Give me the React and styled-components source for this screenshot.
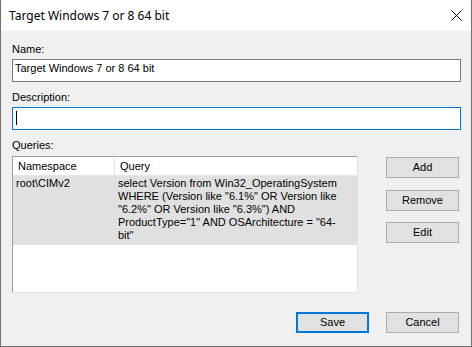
import styled, { createGlobalStyle } from "styled-components";

const GlobalStyle = createGlobalStyle`
    body {
        margin: 0;
        background: #ffffff;
        font-family: "Liberation Sans", Arial, sans-serif;
    }
`;

export default function App(){
    return(
        <>
        <GlobalStyle/>
        <WINDOW>
            <TITLEBAR>
                <TITLE>Target Windows 7 or 8 64 bit</TITLE>
                <svg width="11" height="11" viewBox="0 0 11 11">
                    <path d="M0.5 0.5 L10.5 10.5 M10.5 0.5 L0.5 10.5" stroke="#000000" strokeWidth="1" fill="none"/>
                </svg>
            </TITLEBAR>
            <BODY>
                <LABEL top={12}>Name:</LABEL>
                <FIELD>Target Windows 7 or 8 64 bit</FIELD>
                <LABEL top={9}>Description:</LABEL>
                <FIELD focused><CARET/></FIELD>
                <LABEL top={9}>Queries:</LABEL>
                <MAIN>
                    <LIST>
                        <HEADER>
                            <HEADCELL divider>Namespace</HEADCELL>
                            <HEADCELL>Query</HEADCELL>
                        </HEADER>
                        <ROW>
                            <CELL>root\CIMv2</CELL>
                            <CELL>
                                select Version from Win32_OperatingSystem<br/>
                                WHERE (Version like "6.1%" OR Version like<br/>
                                "6.2%" OR Version like "6.3%") AND<br/>
                                ProductType="1" AND OSArchitecture = "64-<br/>
                                bit"
                            </CELL>
                        </ROW>
                    </LIST>
                    <SIDE>
                        <BUTTON top={1}>Add</BUTTON>
                        <BUTTON top={12}>Remove</BUTTON>
                        <BUTTON top={11}>Edit</BUTTON>
                    </SIDE>
                </MAIN>
                <FOOTER>
                    <BUTTON primary>Save</BUTTON>
                    <BUTTON>Cancel</BUTTON>
                </FOOTER>
            </BODY>
        </WINDOW>
        </>
    );
}

const WINDOW = styled.div`
    width: 472px;
    height: 347px;
    box-sizing: border-box;
    background: #f0f0f0;
    border: 1px solid #6f6f6f;
    border-top: none;
    display: flex;
    flex-direction: column;
    color: #000000;
`;
const TITLEBAR = styled.div`
    height: 31px;
    background: #ffffff;
    display: flex;
    align-items: center;
    justify-content: space-between;
    padding: 0 9px 0 8px;
    flex-shrink: 0;
`;
const TITLE = styled.span`
    font-family: "Noto Sans", "Open Sans", sans-serif;
    font-size: 12px;
    line-height: 16px;
`;
const BODY = styled.div`
    display: flex;
    flex-direction: column;
    padding: 0 10px 0 11px;
`;
const LABEL = styled.div`
    font-size: 11px;
    line-height: 13px;
    margin-top: ${p => p.top}px;
`;
const FIELD = styled.div`
    height: 23px;
    box-sizing: border-box;
    margin-top: 3px;
    padding: 2px;
    background: #ffffff;
    border: 1px solid ${p => p.focused ? "#0078d7" : "#7a7a7a"};
    font-size: 11px;
    line-height: 13px;
    white-space: nowrap;
`;
const CARET = styled.div`
    width: 1px;
    height: 14px;
    margin: 1px 0 0 1px;
    background: #000000;
`;
const MAIN = styled.div`
    display: flex;
    margin-top: 4px;
`;
const LIST = styled.div`
    width: 346px;
    height: 137px;
    box-sizing: border-box;
    background: #ffffff;
    border: 1px solid;
    border-color: #a0a0a0 #e3e3e3 #e3e3e3 #a0a0a0;
`;
const HEADER = styled.div`
    display: grid;
    grid-template-columns: 102px 1fr;
    height: 19px;
    box-sizing: border-box;
    border-bottom: 1px solid #e5e5e5;
`;
const HEADCELL = styled.div`
    font-size: 11px;
    line-height: 18px;
    padding-left: 5px;
    border-right: ${p => p.divider ? "1px solid #e5e5e5" : "none"};
`;
const ROW = styled.div`
    display: grid;
    grid-template-columns: 102px 1fr;
    background: #e0e0e0;
    padding: 1px 0 3px;
`;
const CELL = styled.div`
    font-size: 11px;
    line-height: 13px;
    padding-left: 3px;
    white-space: nowrap;
`;
const SIDE = styled.div`
    display: flex;
    flex-direction: column;
    margin-left: 28px;
`;
const BUTTON = styled.button`
    width: 73px;
    height: 21px;
    box-sizing: border-box;
    margin: ${p => p.top || 0}px 0 0 0;
    padding: 0;
    background: #e1e1e1;
    border: ${p => p.primary ? "2px solid #0078d7" : "1px solid #adadad"};
    font-family: "Liberation Sans", Arial, sans-serif;
    font-size: 11px;
    line-height: 13px;
    color: #000000;
`;
const FOOTER = styled.div`
    display: flex;
    justify-content: flex-end;
    gap: 17px;
    margin-top: 19px;
    padding-right: 2px;
`;
